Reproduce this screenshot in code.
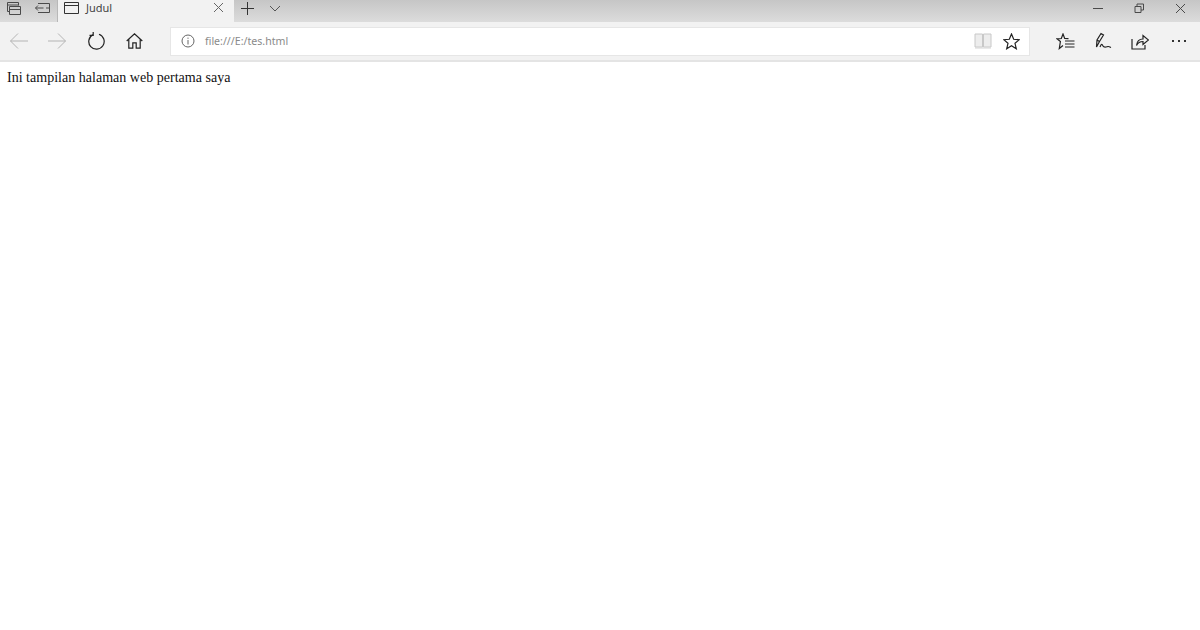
<script>
</script>

<div class="window">
  <div class="tabbar">
    <div class="tabtools">
      <svg class="ic" width="14" height="13" viewBox="0 0 14 13"><path d="M2.5 9.5H0.5V0.5H11.5V3.5M0.5 3H11.5M2.5 4.5H13.5V12.5H2.5ZM2.5 7.5H13.5" /></svg>
      <svg class="ic" width="15" height="10" viewBox="0 0 15 10"><path d="M3 0.5H14.5V9.5H3M0.5 5H8.5M0.5 5L3 2.5M0.5 5L3 7.5M11 5H14.5" /></svg>
    </div>
    <div class="tab">
      <svg class="ic" width="15" height="12" viewBox="0 0 15 12"><path d="M0.5 0.5H14.5V11.5H0.5ZM0.5 3.5H14.5" /></svg>
      <span class="title">Judul</span>
      <svg class="ic close" width="11" height="11" viewBox="0 0 11 11"><path d="M1 1L10 10M10 1L1 10" /></svg>
    </div>
    <div class="tabactions">
      <svg class="ic plus" width="13" height="13" viewBox="0 0 13 13"><path d="M6.5 0V13M0 6.5H13" /></svg>
      <svg class="ic chev" width="12" height="7" viewBox="0 0 12 7"><path d="M1 1L6 6L11 1" /></svg>
    </div>
    <div class="spacer"></div>
    <div class="winctl">
      <svg class="ic" width="10" height="10" viewBox="0 0 10 10"><path d="M0 5.5H10" /></svg>
      <svg class="ic" width="10" height="10" viewBox="0 0 10 10"><path d="M1 3.5H7V9.5H1ZM3 3.5V1H9.5V7H7" /></svg>
      <svg class="ic" width="11" height="11" viewBox="0 0 11 11"><path d="M1 1L10 10M10 1L1 10" /></svg>
    </div>
  </div>

  <div class="toolbar">
    <div class="nav">
      <svg class="ic dim" width="18" height="16" viewBox="0 0 18 16"><path d="M0.5 8H18M0.5 8L8 0.5M0.5 8L8 15.5" /></svg>
      <svg class="ic dim" width="18" height="16" viewBox="0 0 18 16"><path d="M0 8H17.5M17.5 8L10 0.5M17.5 8L10 15.5" /></svg>
      <svg class="ic dark refresh" width="18" height="18" viewBox="0 0 18 18"><path d="M5 2.6A7.7 7.7 0 1 0 11 2.2M5.2 0V3.4H1.5" /></svg>
      <svg class="ic dark" width="17" height="16" viewBox="0 0 17 16"><path d="M0.7 8L8.5 0.8L16.3 8M2.8 6.2V15.2H6.8V9.8H10.2V15.2H14.2V6.2" /></svg>
    </div>
    <div class="address">
      <svg class="ic info" width="14" height="14" viewBox="0 0 14 14"><circle cx="7" cy="7" r="6" /><path d="M7 6V10.5M7 3.6V4.8" /></svg>
      <span class="url">file:///E:/tes.html</span>
      <span class="spacer"></span>
      <svg class="book" width="18" height="16" viewBox="0 0 18 16"><path d="M1 1H8.5V14H1ZM9.5 1H17V14H9.5Z" fill="#ededed" stroke="#c8c8c8" /><path d="M1 15H17" stroke="#d4d4d4" fill="none" /></svg>
      <svg class="ic dark" width="17" height="17" viewBox="0 0 17 17"><path d="M8.5 1L10.7 6.3L16.2 6.7L12 10.3L13.3 15.8L8.5 12.8L3.7 15.8L5 10.3L0.8 6.7L6.3 6.3Z" /></svg>
    </div>
    <div class="tools">
      <svg class="ic dark" width="19" height="17" viewBox="0 0 19 17"><path d="M12.5 5.7L8.7 5.5L7 1L5.3 5.5L1 5.8L4.4 8.6L3.3 15.5L7 12.5M9 8H18.5M9 11H18.5M9 14H18.5" /></svg>
      <svg class="ic dark" width="18" height="18" viewBox="0 0 18 18"><path d="M2.5 15L3 8L7 1.5L9.5 3L5.5 9.5ZM3 8L5.5 9.5M6 15C7.5 11.5 8 12 9 14C10 16 12 15 14 14.5C15 14.3 16 15 17 15.5" /></svg>
      <svg class="ic dark" width="18" height="17" viewBox="0 0 18 17"><path d="M1 6V16H14V12M5.5 12.5C6 8 8.5 6 12 6V2.5L17.5 7L12 11.5V8.5C9.5 8.5 7 9.5 5.5 12.5Z" /></svg>
      <div class="dots"><i></i><i></i><i></i></div>
    </div>
  </div>

  <p class="content">Ini tampilan halaman web pertama saya</p>
</div>

<style>
  :global(body) {
    margin: 0;
    background: #fff;
  }
  .window {
    width: 1200px;
    height: 630px;
    overflow: hidden;
    background: #fff;
    font-family: "Noto Sans", "Open Sans", sans-serif;
  }
  .ic {
    display: block;
    flex: none;
    fill: none;
    stroke: #4a4a4a;
    stroke-width: 1;
  }
  .dim { stroke: #b4b4b4; }
  .dark { stroke: #222; stroke-width: 1.2; }
  .tabbar {
    height: 22px;
    display: flex;
    align-items: stretch;
    background: linear-gradient(#c6c6c6, #dcdcdc);
  }
  .tabtools {
    width: 57px;
    flex: none;
    display: flex;
    align-items: center;
    gap: 14px;
    padding: 0 0 6px 7px;
    box-sizing: border-box;
  }
  .tab {
    width: 177px;
    flex: none;
    display: flex;
    align-items: center;
    box-sizing: border-box;
    padding: 0 10px 7px 6px;
    background: #f2f2f2;
    border-left: 1px solid #b8b8b8;
  }
  .tab .ic { stroke: #333; }
  .tab .close { stroke: #666; }
  .title {
    flex: 1;
    margin-left: 7px;
    font-size: 11px;
    color: #444;
  }
  .tabactions {
    display: flex;
    align-items: center;
    gap: 15px;
    padding: 0 0 6px 7px;
  }
  .tabactions .plus { stroke: #333; }
  .tabactions .chev { stroke: #555; }
  .spacer { flex: 1; }
  .winctl {
    display: flex;
    align-items: center;
    gap: 31px;
    padding: 0 14px 6px 0;
  }
  .toolbar {
    height: 40px;
    box-sizing: border-box;
    display: flex;
    align-items: center;
    background: #f2f2f2;
    border-bottom: 2px solid #e4e4e4;
  }
  .nav {
    width: 170px;
    flex: none;
    display: flex;
    align-items: center;
    gap: 20px;
    padding-left: 10px;
    box-sizing: border-box;
  }
  .refresh { margin-left: 2px; }
  .address {
    width: 860px;
    height: 29px;
    flex: none;
    box-sizing: border-box;
    display: flex;
    align-items: center;
    padding: 0 9px 0 10px;
    background: #fff;
    border: 1px solid #e6e6e6;
  }
  .info { stroke: #666; }
  .url {
    margin-left: 10px;
    font-size: 10.6px;
    color: #8a8a8a;
  }
  .book { display: block; flex: none; margin-right: 11px; }
  .tools {
    flex: 1;
    display: flex;
    align-items: center;
    gap: 19px;
    padding-left: 26px;
  }
  .dots {
    display: flex;
    gap: 4px;
    margin-left: 4px;
  }
  .dots i {
    width: 2px;
    height: 2px;
    background: #333;
  }
  .content {
    margin: 0;
    padding: 6px 0 0 7px;
    font-family: "Liberation Serif", "Times New Roman", serif;
    font-size: 14.06px;
    line-height: 18px;
    color: #111;
  }
</style>
